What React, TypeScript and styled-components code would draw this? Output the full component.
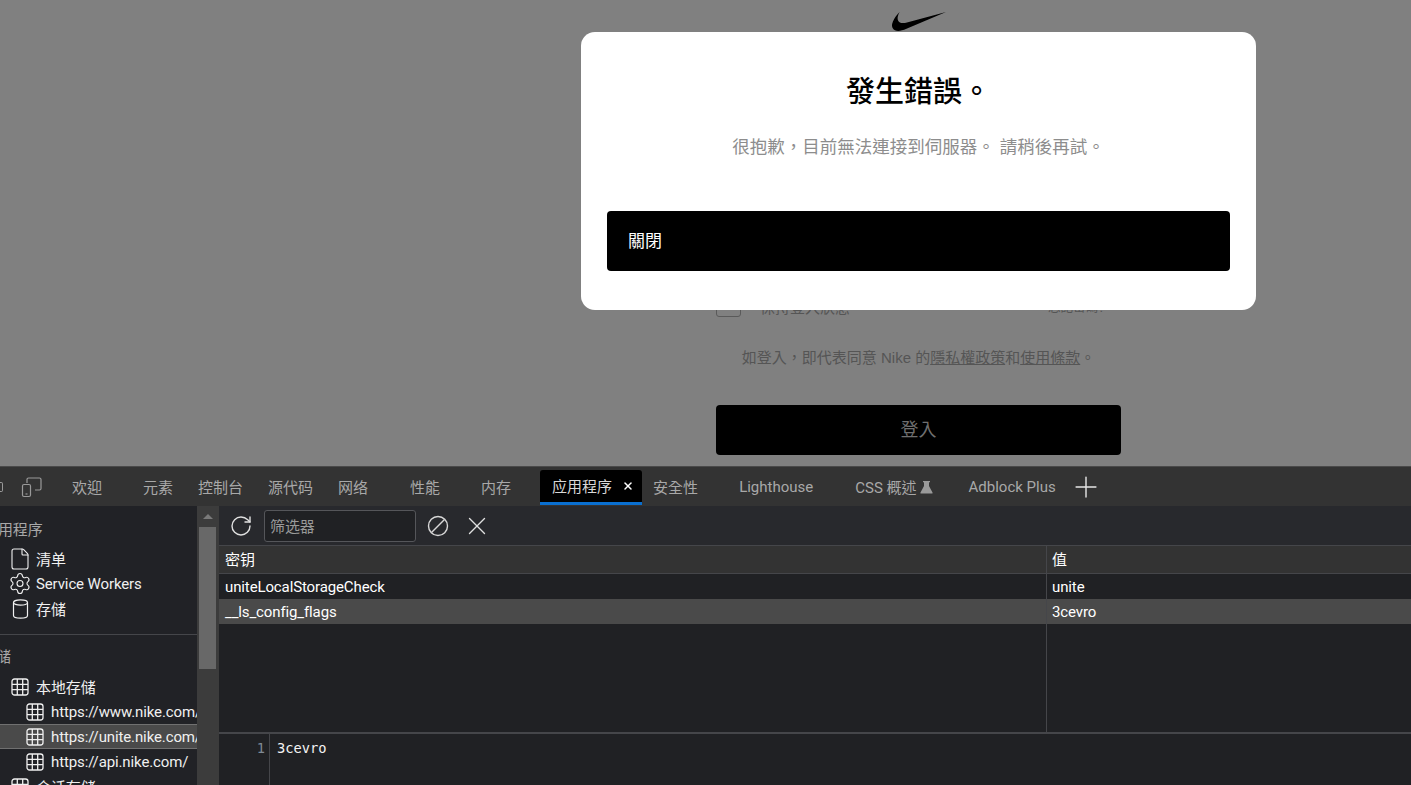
import styled, { createGlobalStyle } from "styled-components";
import { File, Plus, RotateCw, Settings, X } from "lucide-react";

const UI_FONT = `Roboto, "Noto Sans CJK TC", "Noto Sans CJK SC", sans-serif`;
const PAGE_FONT = `"Liberation Sans", "Noto Sans CJK TC", sans-serif`;

const GlobalStyle = createGlobalStyle`
  html, body {
    margin: 0;
    padding: 0;
    background: #202124;
    overflow: hidden;
  }
  * {
    box-sizing: border-box;
  }
`;

const Swoosh = () => (
  <SwooshSvg viewBox="0 7.8 24 8.4">
    <path d="M24 7.8L6.442 15.276c-1.456.616-2.679.925-3.668.925-1.12 0-1.933-.392-2.437-1.177-.317-.504-.41-1.143-.28-1.918.13-.775.476-1.6 1.036-2.478.467-.71 1.232-1.643 2.297-2.8a6.122 6.122 0 00-.784 1.848c-.28 1.195-.028 2.072.756 2.632.373.261.886.392 1.54.392.522 0 1.11-.084 1.764-.252L24 7.8z" />
  </SwooshSvg>
);

const DeviceIcon = () => (
  <svg width="22" height="22" viewBox="0 0 22 22" fill="none" stroke="#9a9a9a" strokeWidth="1.2">
    <path d="M6 7V3.500C6 2.700 6.700 2 7.500 2h11C19.300 2 20 2.700 20 3.500v9c0 .8-.7 1.500-1.500 1.500H14" />
    <rect x="1.500" y="8.500" width="8" height="12" rx="1.500" />
    <path d="M4.500 18h2" />
  </svg>
);

const ClearIcon = () => (
  <svg width="22" height="22" viewBox="0 0 22 22" fill="none" stroke="#d8d8d8" strokeWidth="1.4">
    <circle cx="11" cy="11" r="9.500" />
    <path d="M4.500 17.500 17.500 4.500" />
  </svg>
);

const FlaskIcon = () => (
  <svg width="13" height="14" viewBox="0 0 13 14" fill="#9a9a9a">
    <path d="M3 1h7v1.200H9V6l3.500 6.500c.3.600 0 1-.6 1H1.100c-.6 0-.9-.4-.6-1L4 6V2.200H3z" />
  </svg>
);

const GridIcon = () => (
  <svg width="18" height="18" viewBox="0 0 18 18" fill="none" stroke="currentColor" strokeWidth="1.300">
    <rect x="1" y="1" width="16" height="16" rx="2.500" />
    <path d="M1 6.300h16M1 11.700h16M6.300 1v16M11.700 1v16" />
  </svg>
);

const CylinderIcon = () => (
  <svg width="17" height="20" viewBox="0 0 17 20" fill="none" stroke="currentColor" strokeWidth="1.200">
    <ellipse cx="8.500" cy="3.500" rx="7" ry="2.700" />
    <path d="M1.500 3.500v13c0 1.500 3.100 2.700 7 2.700s7-1.200 7-2.700v-13" />
  </svg>
);

const tabs = [
  { label: "欢迎", gap: 30 },
  { label: "元素", gap: 41 },
  { label: "控制台", gap: 25 },
  { label: "源代码", gap: 25 },
  { label: "网络", gap: 25 },
  { label: "性能", gap: 42 },
  { label: "内存", gap: 41 },
];

const App = () => {
  return (
    <Screen>
      <GlobalStyle />
      <Page>
        <Swoosh />
        <RememberRow>
          <Checkbox />
          <RememberText>保持登入狀態</RememberText>
          <ForgotText>忘記密碼?</ForgotText>
        </RememberRow>
        <Terms>
          如登入，即代表同意 Nike 的<TermsLink>隱私權政策</TermsLink>和<TermsLink>使用條款</TermsLink>。
        </Terms>
        <SubmitButton>登入</SubmitButton>

        <Modal>
          <ModalTitle>發生錯誤。</ModalTitle>
          <ModalText>很抱歉，目前無法連接到伺服器。 請稍後再試。</ModalText>
          <CloseButton>關閉</CloseButton>
        </Modal>
      </Page>

      <Devtools>
        <TabBar>
          <ClippedIcon />
          <DeviceSlot>
            <DeviceIcon />
          </DeviceSlot>
          {tabs.map((tab) => (
            <Tab key={tab.label} $gap={tab.gap}>
              {tab.label}
            </Tab>
          ))}
          <ActiveTab>
            应用程序
            <X size={12} strokeWidth={3} color="#ffffff" />
          </ActiveTab>
          <Tab $gap={11}>安全性</Tab>
          <Tab $gap={41}>Lighthouse</Tab>
          <Tab $gap={42}>CSS 概述</Tab>
          <FlaskSlot>
            <FlaskIcon />
          </FlaskSlot>
          <Tab $gap={36}>Adblock Plus</Tab>
          <PlusSlot>
            <Plus size={34} strokeWidth={1} color="#e6e6e6" />
          </PlusSlot>
        </TabBar>

        <Panels>
          <Sidebar>
            <SectionHead $offset={-17} $top={12}>应用程序</SectionHead>
            <TreeGap $size={4} />
            <TreeRow $indent={8}>
              <IconSlot>
                <File size={24} strokeWidth={1.1} />
              </IconSlot>
              清单
            </TreeRow>
            <TreeRow $indent={8}>
              <IconSlot>
                <Settings size={25} strokeWidth={1.1} />
              </IconSlot>
              Service Workers
            </TreeRow>
            <TreeRow $indent={8}>
              <IconSlot>
                <CylinderIcon />
              </IconSlot>
              存储
            </TreeRow>
            <SideDivider />
            <SectionHead $offset={-19} $top={10}>存储</SectionHead>
            <TreeGap $size={5} />
            <TreeRow $indent={8}>
              <IconSlot>
                <GridIcon />
              </IconSlot>
              本地存储
            </TreeRow>
            <TreeRow $indent={23}>
              <IconSlot>
                <GridIcon />
              </IconSlot>
              https://www.nike.com/
            </TreeRow>
            <TreeRow $indent={23} $selected>
              <IconSlot>
                <GridIcon />
              </IconSlot>
              https://unite.nike.com/
            </TreeRow>
            <TreeRow $indent={23}>
              <IconSlot>
                <GridIcon />
              </IconSlot>
              https://api.nike.com/
            </TreeRow>
            <TreeRow $indent={8}>
              <IconSlot>
                <GridIcon />
              </IconSlot>
              会话存储
            </TreeRow>
          </Sidebar>

          <ScrollTrack>
            <ScrollArrow />
            <ScrollThumb />
          </ScrollTrack>

          <Main>
            <Toolbar>
              <RotateCw size={24} strokeWidth={1.4} color="#e0e0e0" />
              <FilterInput>筛选器</FilterInput>
              <ClearIcon />
              <CloseSlot>
                <X size={30} strokeWidth={1.1} color="#e0e0e0" />
              </CloseSlot>
            </Toolbar>

            <TableHead>
              <KeyCell>密钥</KeyCell>
              <ValueCell>值</ValueCell>
            </TableHead>
            <TableRow>
              <KeyCell>uniteLocalStorageCheck</KeyCell>
              <ValueCell>unite</ValueCell>
            </TableRow>
            <TableRow $selected>
              <KeyCell>__ls_config_flags</KeyCell>
              <ValueCell>3cevro</ValueCell>
            </TableRow>
            <TableFill>
              <KeyCell />
              <ValueCell />
            </TableFill>

            <CodePane>
              <Gutter>1</Gutter>
              <Code>3cevro</Code>
            </CodePane>
          </Main>
        </Panels>
      </Devtools>
    </Screen>
  );
};

export default App;

const Screen = styled.div`
  width: 1411px;
  height: 785px;
  display: flex;
  flex-direction: column;
  overflow: hidden;
`;

const Page = styled.div`
  position: relative;
  height: 466px;
  flex: none;
  padding: 12px 0 0 716px;
  background: #808080;
  font-family: ${PAGE_FONT};
  overflow: hidden;
`;

const SwooshSvg = styled.svg`
  display: block;
  width: 54px;
  height: 19px;
  margin: 0 0 0 176px;
  fill: #000000;
`;

const RememberRow = styled.div`
  width: 405px;
  height: 22px;
  margin-top: 264px;
  display: flex;
  align-items: center;
  font-size: 15px;
  color: #555555;
`;

const Checkbox = styled.span`
  width: 25px;
  height: 22px;
  border: 1px solid #5a5a5a;
  border-radius: 3px;
`;

const RememberText = styled.span`
  margin-left: 19px;
`;

const ForgotText = styled.span`
  margin-left: auto;
  padding-right: 16px;
  font-size: 12.5px;
`;

const Terms = styled.p`
  width: 405px;
  margin: 29px 0 0;
  font-size: 15px;
  line-height: 24px;
  text-align: center;
  color: #555555;
`;

const TermsLink = styled.span`
  text-decoration: underline;
`;

const SubmitButton = styled.div`
  width: 405px;
  height: 50px;
  margin-top: 35px;
  padding-bottom: 4px;
  display: flex;
  align-items: center;
  justify-content: center;
  background: #000000;
  border-radius: 4px;
  font-size: 18px;
  color: #6f6f6f;
`;

const Modal = styled.div`
  position: absolute;
  left: 581px;
  top: 32px;
  width: 675px;
  height: 278px;
  padding: 40px 26px 0;
  background: #ffffff;
  border-radius: 14px;
  text-align: center;
`;

const ModalTitle = styled.h1`
  margin: 0;
  font-size: 29px;
  line-height: 40px;
  font-weight: 500;
  color: #000000;
`;

const ModalText = styled.p`
  margin: 22px 0 0;
  font-size: 17.5px;
  line-height: 26px;
  color: #8d8d8d;
`;

const CloseButton = styled.div`
  margin-top: 51px;
  height: 60px;
  padding: 0 0 3px 21px;
  display: flex;
  align-items: center;
  background: #000000;
  border-radius: 4px;
  font-size: 17px;
  color: #ffffff;
`;

const Devtools = styled.div`
  flex: 1;
  display: flex;
  flex-direction: column;
  min-height: 0;
  background: #212226;
  font-family: ${UI_FONT};
  font-size: 15px;
  letter-spacing: -0.12px;
  color: #f0f0f0;
`;

const TabBar = styled.div`
  height: 40px;
  flex: none;
  display: flex;
  align-items: center;
  background: #333333;
  border-top: 1px solid #4a4a4a;
  letter-spacing: 0;
`;

const ClippedIcon = styled.span`
  width: 3px;
  height: 10px;
  border: 1px solid #9a9a9a;
  border-left: none;
  border-radius: 0 2px 2px 0;
`;

const DeviceSlot = styled.span`
  display: flex;
  margin-left: 18px;
  margin-right: -1px;
`;

const Tab = styled.span<{ $gap: number }>`
  margin-left: ${(p) => p.$gap}px;
  color: #a8a8a8;
  white-space: nowrap;
`;

const ActiveTab = styled.span`
  height: 35px;
  width: 102px;
  margin-left: 29px;
  margin-top: 1px;
  padding: 0 8px 0 12px;
  display: flex;
  align-items: center;
  justify-content: space-between;
  background: #000000;
  border-bottom: 3px solid #0a6fd0;
  border-radius: 3px 3px 0 0;
  color: #d8d8d8;
`;

const FlaskSlot = styled.span`
  display: flex;
  margin-left: 3px;
`;

const PlusSlot = styled.span`
  display: flex;
  margin-left: 13px;
`;

const Panels = styled.div`
  flex: 1;
  display: flex;
  min-height: 0;
`;

const Sidebar = styled.div`
  width: 197px;
  flex: none;
  overflow: hidden;
  background: #212226;
`;

const SectionHead = styled.div<{ $offset: number; $top: number }>`
  height: 24px;
  margin: ${(p) => p.$top}px 0 0 ${(p) => p.$offset}px;
  line-height: 24px;
  color: #a8a8a8;
  white-space: nowrap;
`;

const TreeRow = styled.div<{ $indent: number; $selected?: boolean }>`
  height: 25px;
  display: flex;
  align-items: center;
  gap: 4px;
  padding-left: ${(p) => p.$indent}px;
  white-space: nowrap;
  color: #f0f0f0;
  background: ${(p) => (p.$selected ? "#4a4a4a" : "transparent")};
  box-shadow: ${(p) => (p.$selected ? "inset 0 1px 0 #707070, inset 0 -1px 0 #707070" : "none")};
`;

const IconSlot = styled.span`
  width: 24px;
  flex: none;
  display: flex;
  align-items: center;
  justify-content: center;
`;

const SideDivider = styled.div`
  height: 1px;
  margin-top: 13px;
  background: #45464a;
`;

const TreeGap = styled.div<{ $size: number }>`
  height: ${(p) => p.$size}px;
`;

const ScrollTrack = styled.div`
  width: 22px;
  flex: none;
  padding: 0 3px 0 2px;
  background: #3c3c3c;
`;

const ScrollArrow = styled.div`
  width: 0;
  height: 0;
  margin: 8px auto 8px;
  border-left: 5px solid transparent;
  border-right: 5px solid transparent;
  border-bottom: 5px solid #7a7a7a;
`;

const ScrollThumb = styled.div`
  height: 142px;
  background: #686868;
`;

const Main = styled.div`
  flex: 1;
  min-width: 0;
  display: flex;
  flex-direction: column;
`;

const Toolbar = styled.div`
  height: 40px;
  flex: none;
  display: flex;
  align-items: center;
  padding-left: 10px;
  gap: 11px;
  background: #28292d;
  border-bottom: 1px solid #45464a;
`;

const CloseSlot = styled.span`
  display: flex;
  margin-left: 2px;
`;

const FilterInput = styled.div`
  width: 152px;
  height: 32px;
  padding-left: 5px;
  display: flex;
  align-items: center;
  border: 1px solid #55565a;
  border-radius: 3px;
  background: #202124;
  color: #9a9a9a;
`;

const KeyCell = styled.div`
  width: 828px;
  flex: none;
  padding-left: 6px;
  border-right: 1px solid #45464a;
  line-height: 27px;
  white-space: nowrap;
`;

const ValueCell = styled.div`
  flex: 1;
  padding-left: 5px;
  line-height: 27px;
  white-space: nowrap;
`;

const TableHead = styled.div`
  height: 28px;
  flex: none;
  display: flex;
  background: #333333;
  border-bottom: 1px solid #45464a;
  color: #ffffff;

  ${KeyCell}, ${ValueCell} {
    line-height: 29px;
  }
`;

const TableRow = styled.div<{ $selected?: boolean }>`
  height: 25px;
  flex: none;
  display: flex;
  background: ${(p) => (p.$selected ? "#4a4a4a" : "#202124")};
  color: #ffffff;
`;

const TableFill = styled.div`
  height: 110px;
  flex: none;
  display: flex;
  background: #202124;
  border-bottom: 2px solid #45464a;

  ${KeyCell}, ${ValueCell} {
    height: 100%;
  }
`;

const CodePane = styled.div`
  flex: 1;
  display: flex;
  background: #202124;
  font-family: "DejaVu Sans Mono", "Liberation Mono", monospace;
  font-size: 13.7px;
  letter-spacing: 0;
  line-height: 28px;
`;

const Gutter = styled.div`
  width: 51px;
  padding-right: 4px;
  text-align: right;
  color: #7f8a96;
  border-right: 1px solid #45464a;
`;

const Code = styled.div`
  padding-left: 7px;
  color: #f4f4f4;
`;
